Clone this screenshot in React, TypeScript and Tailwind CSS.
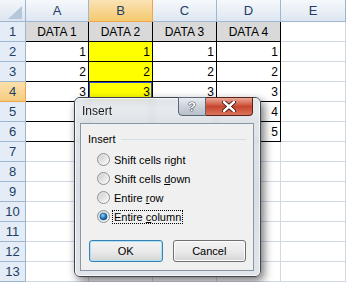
import React from "react";

const colW = ["w-[63px]", "w-[64px]", "w-[64px]", "w-[64px]", "flex-1"];
const letters = ["A", "B", "C", "D", "E"];

function Radio({ checked }: { checked?: boolean }) {
  return (
    <svg width="13" height="13" viewBox="0 0 13 13" className="shrink-0">
      <defs>
        <linearGradient id="rOut" x1="0" y1="0" x2="1" y2="1">
          <stop offset="0" stopColor="#d8d8d8" />
          <stop offset="1" stopColor="#ffffff" />
        </linearGradient>
        <linearGradient id="rIn" x1="0" y1="0" x2="1" y2="1">
          <stop offset="0" stopColor="#cfcfcf" />
          <stop offset="1" stopColor="#f7f7f7" />
        </linearGradient>
        <radialGradient id="rDot" cx="0.4" cy="0.35" r="0.7">
          <stop offset="0" stopColor="#8fd8f8" />
          <stop offset="0.5" stopColor="#2a83c4" />
          <stop offset="1" stopColor="#0c3b6e" />
        </radialGradient>
      </defs>
      <circle cx="6.5" cy="6.5" r="6" fill="url(#rOut)" stroke="#8e8f8f" strokeWidth="1" />
      <circle cx="6.5" cy="6.5" r="4.2" fill="url(#rIn)" />
      {checked && <circle cx="6.5" cy="6.5" r="3.6" fill="url(#rDot)" stroke="#1b4f82" strokeWidth="0.5" />}
    </svg>
  );
}

function Cell({ r, c }: { r: number; c: number }) {
  const inTable = r >= 1 && r <= 6 && c <= 3;
  const isHead = r === 1 && inTable;
  const yellow = c === 1 && r >= 2 && r <= 4;
  const selected = c === 1 && r === 4;
  const showVal = inTable && (r <= 4 || c === 3);
  const text = isHead ? `DATA ${c + 1}` : showVal ? String(r - 1) : "";
  return (
    <div
      className={[
        colW[c],
        "box-border h-full border-r border-b flex items-center text-[12px] leading-none text-black",
        inTable ? "border-black" : "border-[#d0d7e5]",
        isHead ? "bg-[#d9d9d9] justify-center" : "justify-end pr-[2px]",
        yellow ? "bg-[#ffff00]" : "",
        selected ? "shadow-[inset_0_0_0_1px_#2f4fd8]" : "",
      ].join(" ")}
    >
      {text}
    </div>
  );
}

export default function App() {
  const rows = Array.from({ length: 13 }, (_, i) => i + 1);
  return (
    <div className="relative w-[346px] h-[282px] overflow-hidden bg-white font-['Liberation_Sans',Arial,sans-serif]">
      <div className="flex flex-col">
        {/* column header row */}
        <div className="flex h-[22px]">
          <div className="relative w-[26px] box-border border-r border-b border-[#9eb6ce] bg-gradient-to-b from-[#f3f6fa] to-[#dce5f0]">
            <svg width="26" height="22" className="absolute left-0 top-0">
              <polygon points="8,19 22,19 22,6" fill="#b7c7da" />
            </svg>
          </div>
          {letters.map((l, i) => (
            <div
              key={l}
              className={[
                colW[i],
                "box-border border-r border-b flex items-center justify-center text-[13px] text-[#233e62]",
                i === 1
                  ? "bg-gradient-to-b from-[#fbe3b4] to-[#f4c96e] border-[#f2a44a]"
                  : "bg-gradient-to-b from-[#f6f9fc] to-[#dde6f1] border-[#9eb6ce]",
              ].join(" ")}
            >
              {l}
            </div>
          ))}
        </div>
        {rows.map((r) => (
          <div key={r} className="flex h-[20px]">
            <div
              className={[
                "w-[26px] box-border border-r border-b flex items-center justify-center text-[13px] text-[#233e62]",
                r === 4
                  ? "bg-gradient-to-b from-[#fbe0ad] to-[#f5cd7e] border-[#f2a44a]"
                  : "bg-[#e4ecf7] border-[#9eb6ce]",
              ].join(" ")}
            >
              {r}
            </div>
            {letters.map((_, c) => (
              <Cell key={c} r={r} c={c} />
            ))}
          </div>
        ))}
      </div>

      {/* Insert dialog */}
      <div className="absolute left-[74px] top-[97px] w-[187px] h-[180px] rounded-[6px] border border-[#3d4650] bg-[rgba(200,208,218,0.78)] backdrop-blur-[3px] shadow-[3px_4px_10px_rgba(0,0,0,0.55)]">
        <div className="absolute inset-0 rounded-[5px] border border-[rgba(255,255,255,0.7)] bg-gradient-to-b from-[rgba(255,255,255,0.45)] via-[rgba(255,255,255,0.1)] to-[rgba(255,255,255,0.3)]" />
        {/* title */}
        <div className="absolute left-[7px] top-[5px] text-[12px] text-[#1a1a1a] leading-[16px]">Insert</div>
        {/* caption buttons */}
        <div className="absolute right-[7px] top-[-1px] flex h-[19px]">
          <div className="w-[28px] box-border border border-[#5b6877] rounded-bl-[4px] bg-gradient-to-b from-[#e9edf2] via-[#cbd2da] to-[#b7c0cb] flex items-center justify-center">
            <span className="text-white font-bold text-[13px] leading-none [text-shadow:0_0_1px_#222,0_0_1px_#222,0_0_1px_#222]">?</span>
          </div>
          <div className="w-[47px] box-border border border-l-0 border-[#5a2218] rounded-br-[4px] bg-gradient-to-b from-[#e9a898] via-[#c8452f] to-[#d9745a] flex items-center justify-center">
            <svg width="14" height="11" viewBox="0 0 14 11">
              <path d="M2 1 L12 10 M12 1 L2 10" stroke="#3b1109" strokeWidth="4.2" strokeLinecap="round" />
              <path d="M2 1 L12 10 M12 1 L2 10" stroke="#ffffff" strokeWidth="2.4" strokeLinecap="round" />
            </svg>
          </div>
        </div>
        {/* client area */}
        <div className="absolute left-[5px] top-[25px] right-[6px] bottom-[5px] box-border border border-[#8996a3] bg-[#f0f0f0] flex flex-col pl-[7px] pr-[7px] pt-[8px] text-[11px] text-black">
          <div className="flex items-center h-[14px]">
            <span className="leading-none">Insert</span>
            <div className="flex-1 h-px bg-[#d5dfe5] ml-[5px]" />
          </div>
          <div className="mt-[4px] flex flex-col pl-[9px]">
            <div className="flex items-center h-[19px]">
              <Radio />
              <span className="ml-[3px] px-[1px] leading-[12px]">Shift cells right</span>
            </div>
            <div className="flex items-center h-[19px]">
              <Radio />
              <span className="ml-[3px] px-[1px] leading-[12px]">
                Shift cells <u>d</u>own
              </span>
            </div>
            <div className="flex items-center h-[19px]">
              <Radio />
              <span className="ml-[3px] px-[1px] leading-[12px]">
                Entire <u>r</u>ow
              </span>
            </div>
            <div className="flex items-center h-[19px]">
              <Radio checked />
              <span className="ml-[3px] px-[1px] leading-[12px] outline outline-1 outline-dotted outline-black">
                Entire <u>c</u>olumn
              </span>
            </div>
          </div>
          <div className="mt-[14px] flex gap-[10px] pl-[1px]">
            <div className="w-[74px] h-[22px] box-border rounded-[3px] border border-[#3c7fb1] shadow-[inset_0_0_0_1px_#a6e3fb] bg-gradient-to-b from-[#f2f2f2] via-[#ebebeb] to-[#d5d5d5] flex items-center justify-center">
              OK
            </div>
            <div className="w-[74px] h-[22px] box-border rounded-[3px] border border-[#707070] shadow-[inset_0_0_0_1px_#fcfcfc] bg-gradient-to-b from-[#f2f2f2] via-[#ebebeb] to-[#d5d5d5] flex items-center justify-center">
              Cancel
            </div>
          </div>
        </div>
      </div>
    </div>
  );
}
